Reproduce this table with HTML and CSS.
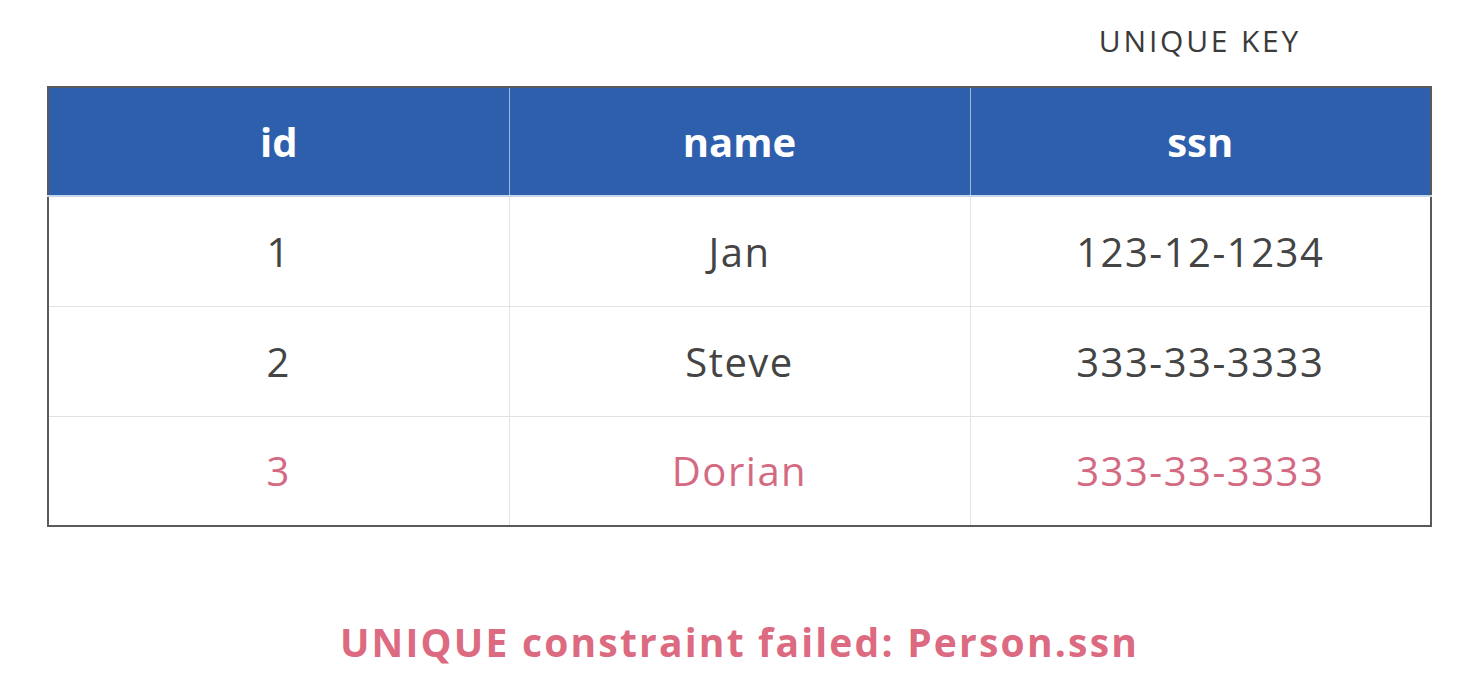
FILE: index.html
```html
<!DOCTYPE html>
<html lang="en">
<head>
<meta charset="utf-8">
<title>UNIQUE constraint</title>
<link rel="stylesheet" href="styles.css">
</head>
<body>
<main class="slide">
  <div class="key-row">
    <div class="key-spacer"></div>
    <div class="key-spacer"></div>
    <div class="key-label">UNIQUE KEY</div>
  </div>
  <table class="data">
    <thead>
      <tr><th>id</th><th>name</th><th>ssn</th></tr>
    </thead>
    <tbody>
      <tr><td>1</td><td>Jan</td><td>123-12-1234</td></tr>
      <tr><td>2</td><td>Steve</td><td>333-33-3333</td></tr>
      <tr class="bad"><td>3</td><td>Dorian</td><td>333-33-3333</td></tr>
    </tbody>
  </table>
  <p class="error">UNIQUE constraint failed: Person.ssn</p>
</main>
</body>
</html>
```
FILE: styles.css
```css
* { box-sizing: border-box; }
html, body { margin: 0; padding: 0; background: #fff; }
body { font-family: "Open Sans", "Liberation Sans", sans-serif; color: #333; }

.slide {
  width: 1460px;
  height: 700px;
  padding: 0 28px 0 47px;
}

.key-row {
  display: grid;
  grid-template-columns: 462px 461px 460px;
  height: 86px;
  align-items: center;
}
.key-label {
  text-align: center;
  font-size: 30px;
  font-weight: 500;
  letter-spacing: 2.8px;
  color: #3a3a3a;
  padding-bottom: 6px;
}

.data {
  width: 1384px;
  border-collapse: collapse;
  table-layout: fixed;
  border: 2px solid #5a5a5a;
}
.data th, .data td {
  width: 461px;
  text-align: center;
  padding: 0;
}
.data th {
  height: 109px;
  background: #2e5fad;
  color: #fff;
  font-size: 40px;
  font-weight: 700;
  border-left: 1px solid #9fb9df;
  border-bottom: 2px solid #c8d6ea;
}
.data th:first-child { border-left: none; }
.data td {
  height: 110px;
  font-size: 40px;
  font-weight: 400;
  letter-spacing: 1.5px;
  color: #444;
  border-left: 1px solid #e2e2e2;
  border-top: 1px solid #e2e2e2;
}
.data td:first-child { border-left: none; }
.data tr.bad td { color: #d46a82; }

.error {
  margin: 88px 0 0 0;
  width: 1385px;
  text-align: center;
  font-size: 39px;
  font-weight: 700;
  letter-spacing: 2.2px;
  color: #dc6a80;
}
```
